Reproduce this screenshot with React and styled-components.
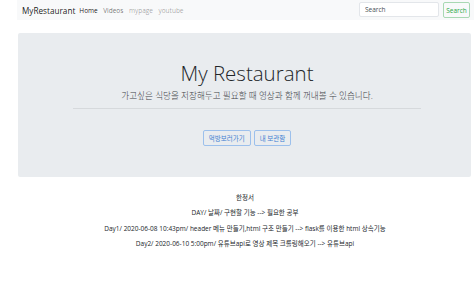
import styled, { createGlobalStyle } from 'styled-components';

const GlobalStyle = createGlobalStyle`
    body {
        margin: 0;
        background: #fff;
        font-family: "Open Sans", "Noto Sans CJK KR", sans-serif;
        color: #212529;
    }
`

const navLinks = [
    { label: "Home", tone: "active" },
    { label: "Videos", tone: "normal" },
    { label: "mypage", tone: "muted" },
    { label: "youtube", tone: "muted" },
]

const notes = [
    "한정서",
    "DAY/ 날짜/ 구현할 기능 --> 필요한 공부",
    "Day1/ 2020-06-08 10:43pm/ header 메뉴 만들기,html 구조 만들기 --> flask를 이용한 html 상속기능",
    "Day2/ 2020-06-10 5:00pm/ 유튜브api로 영상 제목 크롤링해오기 --> 유튜브api",
]

const App = () => {
    return (
        <Page>
            <GlobalStyle />
            <Navbar>
                <Brand>MyRestaurant</Brand>
                <NavList>
                    {navLinks.map((link) => (
                        <NavLink key={link.label} $tone={link.tone}>{link.label}</NavLink>
                    ))}
                </NavList>
                <SearchForm onSubmit={(e) => e.preventDefault()}>
                    <SearchInput placeholder="Search" />
                    <SearchButton type="submit">Search</SearchButton>
                </SearchForm>
            </Navbar>

            <Jumbotron>
                <Title>My Restaurant</Title>
                <Lead>가고싶은 식당을 저장해두고 필요할 때 영상과 함께 꺼내볼 수 있습니다.</Lead>
                <Divider />
                <ButtonRow>
                    <OutlineButton>먹방보러가기</OutlineButton>
                    <OutlineButton>내 보관함</OutlineButton>
                </ButtonRow>
            </Jumbotron>

            <Notes>
                {notes.map((line) => (
                    <Note key={line}>{line}</Note>
                ))}
            </Notes>
        </Page>
    );
};

const Page = styled.div`
    width: 474px;
    min-height: 287px;
`

const Navbar = styled.nav`
    display: flex;
    align-items: center;
    height: 20px;
    margin-left: 17px;
    padding: 0 4px 0 5px;
    background: #f8f9fa;
`

const Brand = styled.a`
    font-size: 8.2px;
    color: rgba(0, 0, 0, 0.9);
    margin-right: 4px;
`

const NavList = styled.div`
    display: flex;
    gap: 5.5px;
    flex: 1;
`

const NavLink = styled.a`
    font-size: 6.5px;
    color: ${({ $tone }) =>
        $tone === "active" ? "rgba(0,0,0,0.9)" : $tone === "normal" ? "rgba(0,0,0,0.55)" : "rgba(0,0,0,0.35)"};
`

const SearchForm = styled.form`
    display: flex;
    gap: 4px;
    margin: 0;
`

const SearchInput = styled.input`
    box-sizing: border-box;
    width: 80px;
    height: 15px;
    padding: 0 5px;
    font-family: inherit;
    font-size: 6.5px;
    border: 1px solid #e3e6ea;
    border-radius: 2px;
    background: #fff;
    outline: none;

    &::placeholder {
        color: #495057;
    }
`

const SearchButton = styled.button`
    box-sizing: border-box;
    height: 16px;
    width: 27px;
    padding: 0;
    font-family: inherit;
    font-size: 6.5px;
    color: #28a745;
    background: transparent;
    border: 1px solid #a8d8b3;
    border-radius: 2px;
`

const Jumbotron = styled.section`
    display: flex;
    flex-direction: column;
    align-items: center;
    margin: 13px 3px 0 18px;
    height: 144px;
    box-sizing: border-box;
    padding: 25px 0 0 5px;
    background: #e9ecef;
    border-radius: 2px;
`

const Title = styled.h1`
    margin: 0;
    font-size: 20.5px;
    font-weight: 300;
    line-height: 30px;
    color: #212529;
`

const Lead = styled.p`
    margin: 2px 0 0;
    font-size: 8.6px;
    font-weight: 300;
    line-height: 12px;
    color: #3d4247;
`

const Divider = styled.hr`
    align-self: stretch;
    margin: 6px 50px 0;
    border: 0;
    border-top: 1px solid rgba(0, 0, 0, 0.08);
`

const ButtonRow = styled.div`
    display: flex;
    gap: 3px;
    margin-top: 21px;
`

const OutlineButton = styled.button`
    height: 16px;
    padding: 0 5px;
    font-family: inherit;
    font-size: 6.5px;
    color: #3f7fd1;
    background: transparent;
    border: 1px solid #9cc0ec;
    border-radius: 2px;
`

const Notes = styled.div`
    display: flex;
    flex-direction: column;
    align-items: center;
    padding-top: 13px;
    margin-left: 16px;
`

const Note = styled.p`
    margin: 0;
    font-size: 6.5px;
    line-height: 15.3px;
    color: #212529;
`

export default App;
